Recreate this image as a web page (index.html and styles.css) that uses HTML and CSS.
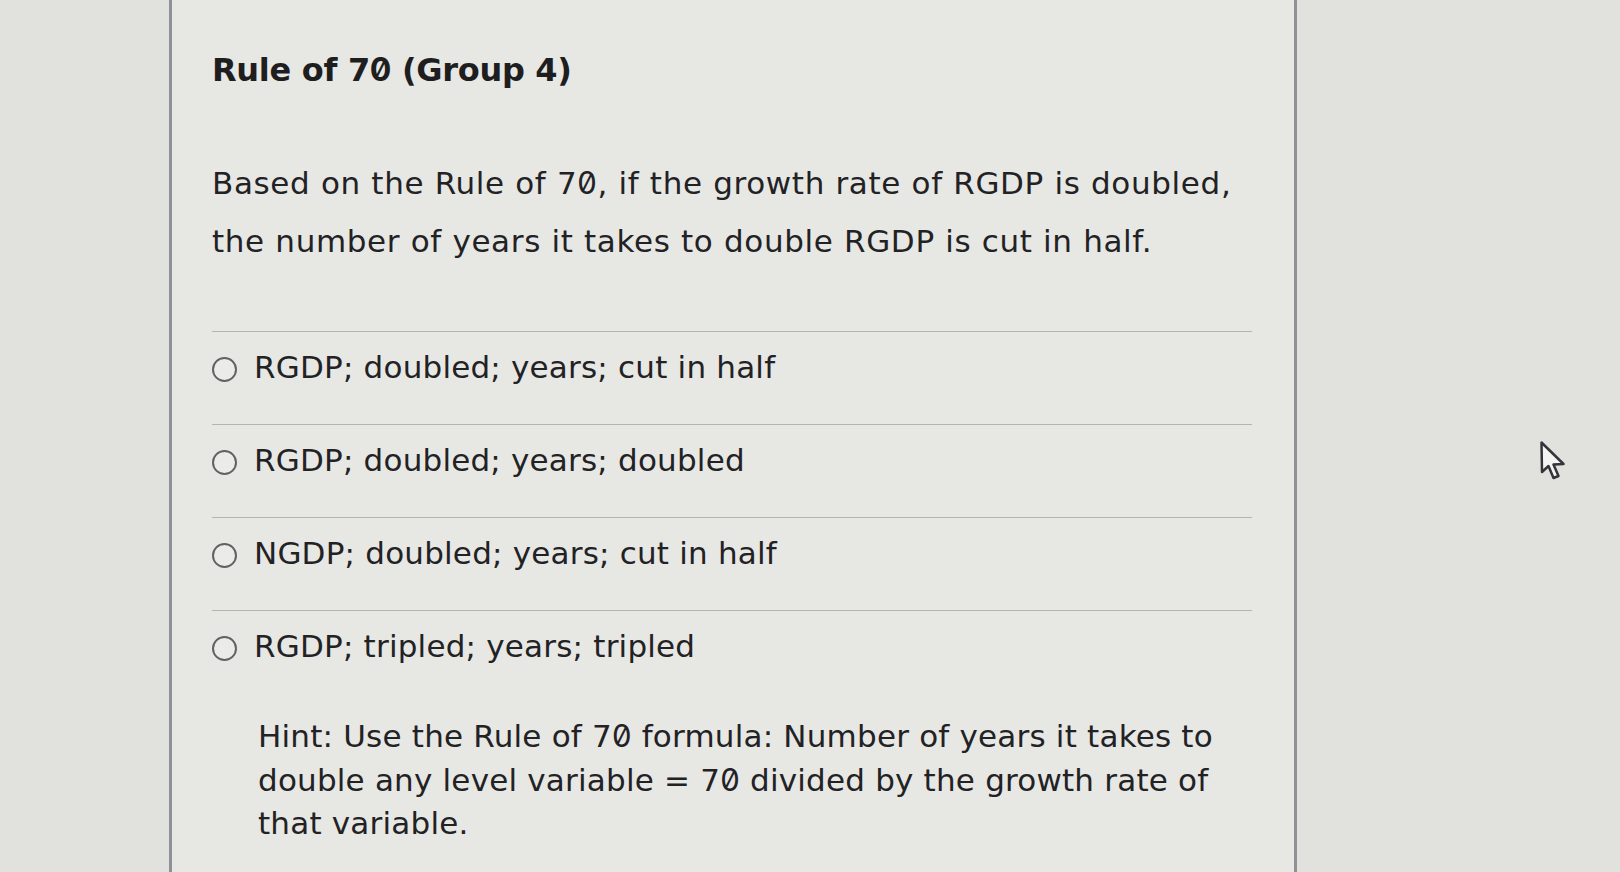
FILE: index.html
```html
<!DOCTYPE html>
<html lang="en">
<head>
<meta charset="utf-8">
<title>Rule of 70 (Group 4)</title>
<link rel="stylesheet" href="styles.css">
</head>
<body>
<div class="page">
  <main class="card">
    <h1 class="title">Rule of 7<span class="zero">0</span> (Group 4)</h1>
    <p class="prompt">Based on the Rule of 7<span class="zero">0</span>, if the growth rate of RGDP is doubled,<br>the number of years it takes to double RGDP is cut in half.</p>
    <ul class="options">
      <li class="option"><span class="radio"></span><span class="label">RGDP; doubled; years; cut in half</span></li>
      <li class="option"><span class="radio"></span><span class="label">RGDP; doubled; years; doubled</span></li>
      <li class="option"><span class="radio"></span><span class="label">NGDP; doubled; years; cut in half</span></li>
      <li class="option"><span class="radio"></span><span class="label">RGDP; tripled; years; tripled</span></li>
    </ul>
    <p class="hint">Hint: Use the Rule of 7<span class="zero">0</span> formula: Number of years it takes to<br>double any level variable = 7<span class="zero">0</span> divided by the growth rate of<br>that variable.</p>
  </main>
  <svg class="cursor" width="28" height="42" viewBox="0 0 28 42" aria-hidden="true">
    <path d="M2.5 2.5 L3 32 L9.5 26 L14.5 38 L19.5 36 L14.5 24.5 L24.5 24 Z" fill="#f4f4f2" stroke="#34343a" stroke-width="2.5" stroke-linejoin="round"/>
  </svg>
</div>
</body>
</html>
```
FILE: styles.css
```css
* { box-sizing: border-box; }
html, body {
  margin: 0;
  padding: 0;
  height: 100%;
  overflow: hidden;
}
body {
  background: #e1e1de;
  font-family: "DejaVu Sans", Verdana, sans-serif;
  color: #222225;
}
.page {
  position: relative;
  height: 872px;
  padding-left: 169px;
}
.card {
  width: 1128px;
  height: 872px;
  background: #e7e7e4;
  border-left: 3px solid #8e9198;
  border-right: 3px solid #8e9198;
  padding: 48px 0 0 40px;
}
.zero {
  font-family: Inter, "DejaVu Sans", sans-serif;
  font-feature-settings: "zero" 1;
}
.title {
  margin: 0;
  font-size: 32px;
  line-height: 44px;
  font-weight: 700;
  letter-spacing: -0.3px;
  color: #1e1e21;
}
.prompt {
  margin: 62px 0 0 0;
  font-size: 31px;
  line-height: 58px;
  letter-spacing: 0.65px;
  font-weight: 400;
  white-space: nowrap;
}
.options {
  list-style: none;
  margin: 61px 0 0 0;
  padding: 0;
  width: 1040px;
}
.option {
  display: flex;
  align-items: center;
  gap: 17px;
  border-top: 1px solid #b4b4b2;
  padding: 15px 0 37px 0;
  font-size: 31px;
  line-height: 40px;
  letter-spacing: 0.2px;
}
.radio {
  flex: none;
  width: 25px;
  height: 25px;
  border: 2.5px solid #626265;
  border-radius: 50%;
  background: #ebebe8;
  margin-top: 4px;
}
.hint {
  margin: 11px 0 0 46px;
  font-size: 31px;
  line-height: 43px;
  letter-spacing: 0.2px;
  white-space: nowrap;
}
.cursor {
  position: absolute;
  left: 1539px;
  top: 440px;
}
```
